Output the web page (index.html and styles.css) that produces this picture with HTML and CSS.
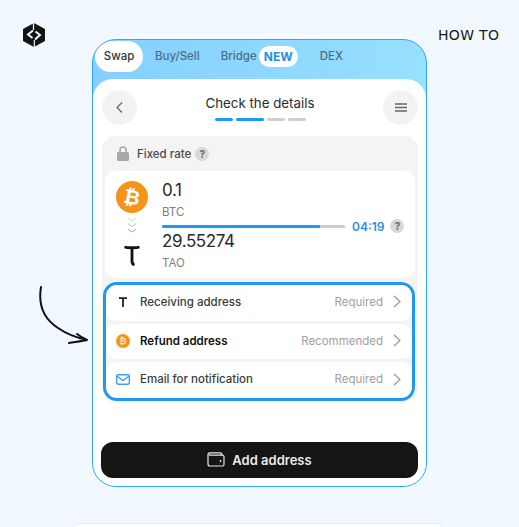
FILE: index.html
```html
<!DOCTYPE html>
<html>

<head>
    <title>How to swap</title>
    <meta charset="utf-8">
    <link rel="stylesheet" href="styles.css">
</head>

<body>
    <div class="page">
        <div class="side-left">
            <svg class="logo" width="24" height="24" viewBox="0 0 24 24">
                <path fill="#141414" d="M12 0 L23 6 L23 18 L12 24 L1 18 L1 6 Z" />
                <path fill="none" stroke="#f1f8ff" stroke-width="2" d="M11 7.500 L6 11.500 L10.500 15 M13.500 8.500 L18 12 L13 16.500" />
                <path fill="none" stroke="#f1f8ff" stroke-width="1.200" d="M11.500 -1 V7 M12.300 17 V25" />
            </svg>
            <svg class="arrow" width="60" height="66" viewBox="0 0 60 66">
                <path fill="none" stroke="#111" stroke-width="2" stroke-linecap="round" stroke-linejoin="round" d="M3 2 C0 20 6 34 20 43 C30 50 40 53 49 55 M39 49 C43 52 47 54 49 55 C45 56 37 57 31 58" />
            </svg>
        </div>

        <div class="swap-card">
            <div class="tabs">
                <div class="tab tab-active">Swap</div>
                <div class="tab tab-buy">Buy/Sell</div>
                <div class="tab tab-bridge">Bridge<span class="new-badge">NEW</span></div>
                <div class="tab tab-dex">DEX</div>
            </div>

            <div class="panel">
                <div class="panel-head">
                    <div class="round-btn">
                        <svg width="7" height="11" viewBox="0 0 7 11"><path fill="none" stroke="#666" stroke-width="1.200" d="M6 0.500 L1 5.500 L6 10.500" /></svg>
                    </div>
                    <div class="head-title">
                        <div class="title">Check the details</div>
                        <div class="steps">
                            <span class="step step-on"></span>
                            <span class="step step-on step-long"></span>
                            <span class="step"></span>
                            <span class="step"></span>
                        </div>
                    </div>
                    <div class="round-btn">
                        <svg width="12" height="9" viewBox="0 0 12 9"><path stroke="#666" stroke-width="1.300" d="M0 1 H12 M0 4.500 H12 M0 8 H12" /></svg>
                    </div>
                </div>

                <div class="details">
                    <div class="rate-row">
                        <svg width="12" height="15" viewBox="0 0 12 15">
                            <path fill="none" stroke="#a8a8a8" stroke-width="1.600" d="M3 7 V4 a3 3 0 0 1 6 0 V7" />
                            <rect x="0" y="6" width="12" height="9" rx="1.500" fill="#a8a8a8" />
                        </svg>
                        <span class="rate-text">Fixed rate</span>
                        <span class="help">?</span>
                    </div>

                    <div class="amounts">
                        <div class="coins">
                            <svg class="coin" width="32" height="32" viewBox="0 0 32 32">
                                <circle cx="16" cy="16" r="16" fill="#f7931a" />
                                <text x="16" y="23" text-anchor="middle" transform="rotate(12 16 16)" class="btc-sign">₿</text>
                            </svg>
                            <svg class="chevrons" width="10" height="17" viewBox="0 0 10 17">
                                <path fill="none" stroke="#d2d2d2" stroke-width="1" d="M1 1 L5 4 L9 1" />
                                <path fill="none" stroke="#c4c4c4" stroke-width="1" d="M1 6.500 L5 9.500 L9 6.500" />
                                <path fill="none" stroke="#aaa" stroke-width="1" d="M1 12 L5 15 L9 12" />
                            </svg>
                            <svg class="tao" width="16" height="22" viewBox="0 0 16 22">
                                <path fill="none" stroke="#111" stroke-width="2.800" d="M0.500 2 C3 3 13 3 15.500 2 M8 2.500 V16 C8 18.500 9 19.500 10.500 20" />
                            </svg>
                        </div>
                        <div class="values">
                            <div class="amount">0.1</div>
                            <div class="ticker">BTC</div>
                            <div class="timer-row">
                                <div class="bar"><div class="bar-fill" style="width: 86.500%"></div></div>
                                <span class="time">04:19</span>
                                <span class="help">?</span>
                            </div>
                            <div class="amount amount-to">29.55274</div>
                            <div class="ticker">TAO</div>
                        </div>
                    </div>

                    <div class="address-list">
                        <div class="address-row">
                            <span class="row-icon">
                                <svg width="8" height="10" viewBox="0 0 8 10"><path fill="none" stroke="#222" stroke-width="1.800" d="M0 1.200 H8 M4 1.200 V10" /></svg>
                            </span>
                            <span class="row-name">Receiving address</span>
                            <span class="row-state">Required</span>
                            <svg class="row-arrow" width="8" height="13" viewBox="0 0 8 13"><path fill="none" stroke="#999" stroke-width="1.200" d="M1 1 L7 6.500 L1 12" /></svg>
                        </div>
                        <div class="address-row">
                            <span class="row-icon">
                                <svg width="14" height="14" viewBox="0 0 14 14">
                                    <circle cx="7" cy="7" r="7" fill="#f7931a" />
                                    <text x="7" y="10" text-anchor="middle" class="btc-small">₿</text>
                                </svg>
                            </span>
                            <span class="row-name row-name-dark">Refund address</span>
                            <span class="row-state">Recommended</span>
                            <svg class="row-arrow" width="8" height="13" viewBox="0 0 8 13"><path fill="none" stroke="#999" stroke-width="1.200" d="M1 1 L7 6.500 L1 12" /></svg>
                        </div>
                        <div class="address-row">
                            <span class="row-icon">
                                <svg width="14" height="11" viewBox="0 0 14 11">
                                    <rect x="0.700" y="0.700" width="12.600" height="9.600" rx="1.500" fill="#fff" stroke="#3ba3f5" stroke-width="1.400" />
                                    <path fill="none" stroke="#3ba3f5" stroke-width="1.400" d="M1 2 L7 6.500 L13 2" />
                                </svg>
                            </span>
                            <span class="row-name">Email for notification</span>
                            <span class="row-state">Required</span>
                            <svg class="row-arrow" width="8" height="13" viewBox="0 0 8 13"><path fill="none" stroke="#999" stroke-width="1.200" d="M1 1 L7 6.500 L1 12" /></svg>
                        </div>
                    </div>
                </div>

                <div class="add-btn">
                    <svg width="18" height="15" viewBox="0 0 18 15">
                        <path fill="none" stroke="#e8e8e8" stroke-width="1.200" d="M1 3 C1 1.500 2 0.800 3 0.800 H13 C14.500 0.800 15 2 15 3 M1 3 V12 C1 13.300 2 14 3 14 H15.500 C16.500 14 17 13.300 17 12.500 V5 C17 3.800 16.300 3.200 15.500 3.200 H2" />
                        <circle cx="13.500" cy="9" r="0.900" fill="#e8e8e8" />
                    </svg>
                    Add address
                </div>
            </div>
        </div>

        <div class="side-right">
            <div class="how-to">HOW TO</div>
        </div>
    </div>

    <div class="next-card"></div>
</body>

</html>
```

FILE: styles.css
```css
* {
    box-sizing: border-box;
}

html,
body {
    margin: 0;
    height: 527px;
    overflow: hidden;
}

body {
    background-color: #f1f8ff;
    font-family: Inter, "Liberation Sans", sans-serif;
    color: #333;
}

.page {
    display: grid;
    grid-template-columns: 92px 335px 92px;
    padding-top: 39px;
    height: 523px;
}

.side-left {
    position: relative;
}

.logo {
    position: absolute;
    left: 22px;
    top: -16px;
}

.arrow {
    position: absolute;
    left: 38px;
    top: 246px;
}

.side-right {
    position: relative;
}

.how-to {
    position: absolute;
    left: 11px;
    top: -12px;
    font-family: "DejaVu Sans", sans-serif;
    font-size: 14px;
    letter-spacing: 0.300px;
    color: #181818;
}

.swap-card {
    height: 448px;
    border: 1px solid #2ea6f7;
    border-radius: 24px;
    overflow: hidden;
    background: linear-gradient(90deg, #84cfff, #98e0ff);
    display: flex;
    flex-direction: column;
}

.tabs {
    height: 39px;
    padding: 1px 0 0 2px;
    display: flex;
    align-items: center;
    flex-shrink: 0;
    font-size: 11.500px;
    font-weight: 500;
    color: #4d6d84;
}

.tab {
    display: flex;
    align-items: center;
    white-space: nowrap;
}

.tab-active {
    width: 48px;
    height: 31px;
    margin-top: -8px;
    padding-bottom: 1px;
    justify-content: center;
    border-radius: 16px;
    background-color: #fff;
    color: #333;
}

.tab-buy {
    margin: -9px 0 0 12px;
}

.tab-bridge {
    margin: -8px 0 0 21px;
}

.tab-dex {
    margin: -9px 0 0 22px;
}

.new-badge {
    width: 39px;
    height: 21px;
    margin-left: 2px;
    line-height: 21px;
    text-align: center;
    border-radius: 11px;
    background-color: #fff;
    color: #2490e8;
    font-size: 12px;
    font-weight: 700;
}

.panel {
    flex: 1;
    padding: 11px 8px 8px 9px;
    background-color: #fff;
    border-radius: 20px 20px 0 0;
    display: flex;
    flex-direction: column;
}

.panel-head {
    display: flex;
    justify-content: space-between;
}

.round-btn {
    width: 35px;
    height: 35px;
    border-radius: 50%;
    background-color: #f3f3f3;
    display: flex;
    align-items: center;
    justify-content: center;
}

.head-title {
    padding-top: 4px;
    display: flex;
    flex-direction: column;
    align-items: center;
}

.title {
    font-size: 13.300px;
    line-height: 18px;
    color: #2b2b2b;
}

.steps {
    margin-top: 6px;
    display: flex;
    gap: 3px;
}

.step {
    width: 18px;
    height: 3px;
    border-radius: 2px;
    background-color: #cfcfcf;
}

.step-on {
    background-color: #1c9bf5;
}

.step-long {
    width: 28px;
}

.details {
    margin-top: 11px;
    padding: 0 3px 3px;
    height: 266px;
    background-color: #f4f4f4;
    border-radius: 14px;
}

.rate-row {
    height: 35px;
    padding-left: 12px;
    display: flex;
    align-items: center;
}

.rate-text {
    margin: 0 4px 0 8px;
    font-size: 11.500px;
    font-weight: 500;
    color: #4a4a4a;
}

.help {
    width: 14px;
    height: 14px;
    line-height: 14px;
    text-align: center;
    border-radius: 50%;
    background-color: #d8d8d8;
    font-size: 10px;
    font-weight: 700;
    color: #666;
}

.amounts {
    height: 107px;
    padding: 10px 12px 0 11px;
    background-color: #fff;
    border-radius: 10px;
    display: flex;
}

.coins {
    width: 32px;
    display: flex;
    flex-direction: column;
    align-items: center;
}

.btc-sign {
    font-family: "DejaVu Sans", sans-serif;
    font-size: 20px;
    font-weight: 700;
    fill: #fff;
}

.btc-small {
    font-family: "DejaVu Sans", sans-serif;
    font-size: 9px;
    font-weight: 700;
    fill: #ffe3bd;
}

.chevrons {
    margin-top: 4px;
}

.tao {
    margin-top: 11px;
}

.values {
    flex: 1;
    margin: -1px 0 0 14px;
}

.amount {
    font-size: 17px;
    line-height: 20px;
    letter-spacing: -0.400px;
    color: #2a2a2a;
}

.amount-to {
    margin-top: -2px;
}

.ticker {
    margin-top: 5px;
    font-size: 11.500px;
    line-height: 14px;
    color: #808080;
}

.timer-row {
    height: 14px;
    display: flex;
    align-items: center;
}

.bar {
    width: 183px;
    height: 3px;
    border-radius: 2px;
    background-color: #cccccc;
    overflow: hidden;
}

.bar-fill {
    height: 100%;
    background-color: #1c9bf5;
}

.time {
    margin: 0 6px 0 7px;
    font-size: 12px;
    font-weight: 600;
    color: #2f8fe0;
}

.address-list {
    margin: 4px 0 0 -2px;
    width: 312px;
    height: 119px;
    background-color: #f4f4f4;
    border: 3px solid #2196f3;
    border-radius: 14px;
    overflow: hidden;
    display: flex;
    flex-direction: column;
    gap: 3px;
}

.address-row {
    flex: 1;
    padding: 0 11px 2px 10px;
    background-color: #fff;
    border-radius: 10px;
    display: flex;
    align-items: center;
    font-size: 11.500px;
}

.row-icon {
    width: 14px;
    display: flex;
    justify-content: center;
}

.row-name {
    margin-left: 10px;
    font-weight: 500;
    color: #3a3a3a;
}

.row-name-dark {
    color: #111;
    font-weight: 600;
}

.row-state {
    margin-left: auto;
    color: #a0a0a0;
}

.row-arrow {
    margin-left: 10px;
}

.add-btn {
    height: 36px;
    margin: auto 0 0 -1px;
    padding-bottom: 1px;
    border-radius: 12px;
    background-color: #151515;
    display: flex;
    align-items: center;
    justify-content: center;
    gap: 7px;
    font-size: 13px;
    font-weight: 600;
    color: #ececec;
}

.next-card {
    position: absolute;
    left: 70px;
    top: 523px;
    width: 372px;
    height: 20px;
    background-color: #fff;
    border: 1px solid #e4e8ee;
    border-radius: 10px 0 0 0;
}
```
